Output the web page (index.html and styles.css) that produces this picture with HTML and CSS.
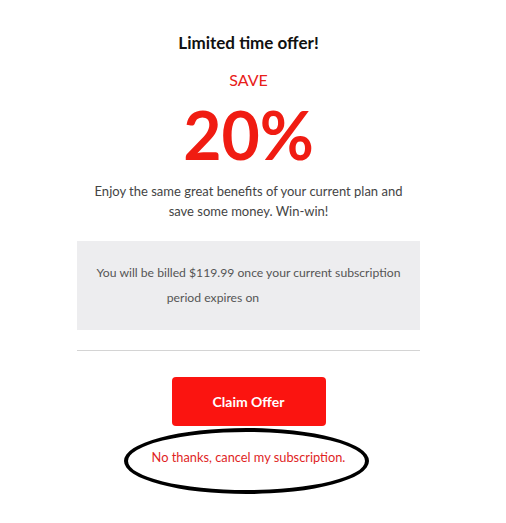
FILE: index.html
```html
<!DOCTYPE html>
<html lang="en">
<head>
<meta charset="UTF-8" />
<meta name="viewport" content="width=device-width, initial-scale=1" />
<title>Limited time offer</title>
<link rel="stylesheet" href="styles.css">
</head>
<body>
  <div class="offer">
    <h1 class="title">Limited time offer!</h1>
    <div class="save">SAVE</div>
    <div class="percent">20%</div>
    <p class="pitch">Enjoy the same great benefits of your current plan and save some money. Win-win!</p>

    <div class="billing">
      <p>You will be billed $119.99 once your current subscription period expires on <span class="date"></span></p>
    </div>

    <hr class="divider" />

    <div class="actions">
      <button class="claim">Claim Offer</button>
      <div class="cancel-wrap">
        <a href="#" class="cancel">No thanks, cancel my subscription.</a>
        <span class="ring"></span>
      </div>
    </div>
  </div>
</body>
</html>
```

FILE: styles.css
```css
body {
  margin: 0;
  background: #fff;
  font-family: Lato, "Noto Sans", sans-serif;
  color: #333;
}
.offer {
  width: 343px;
  margin: 0 auto;
  padding: 31px 9px 60px 0;
  text-align: center;
}
.title {
  margin: 0;
  font-size: 17px;
  font-weight: 700;
  line-height: 24px;
  color: #111;
}
.save {
  margin-top: 13px;
  font-size: 16px;
  line-height: 24px;
  color: #e8201a;
}
.percent {
  margin-top: 4px;
  margin-bottom: 7px;
  font-size: 66px;
  font-weight: 700;
  line-height: 78px;
  color: #f01c12;
}
.pitch {
  margin: 0 12px;
  font-size: 13px;
  line-height: 20px;
  color: #444;
}
.billing {
  margin-top: 20px;
  background: #ededef;
  padding: 19px 6px 20px;
}
.billing p {
  margin: 0;
  font-size: 12.2px;
  line-height: 25px;
  color: #555;
}
.billing .date {
  display: inline-block;
  width: 68px;
}
.divider {
  margin: 20px 0 0 0;
  border: none;
  border-top: 1px solid #d4d4d4;
}
.actions {
  padding-top: 26px;
  display: flex;
  flex-direction: column;
  align-items: center;
}
.claim {
  width: 154px;
  height: 49px;
  border: none;
  border-radius: 4px;
  background: #fb1410;
  color: #fff;
  font-family: inherit;
  font-size: 14px;
  font-weight: 700;
  cursor: pointer;
}
.cancel-wrap {
  position: relative;
  margin-top: 23px;
}
.cancel {
  display: block;
  font-size: 12.8px;
  line-height: 16px;
  color: #e01f1f;
  text-decoration: none;
}
/* hand-drawn ring round the cancel link */
.ring {
  position: absolute;
  left: calc(50% - 125px);
  top: -21px;
  width: 245px;
  height: 66px;
  box-sizing: border-box;
  border: 4px solid #000;
  border-radius: 50%;
  pointer-events: none;
}
```
